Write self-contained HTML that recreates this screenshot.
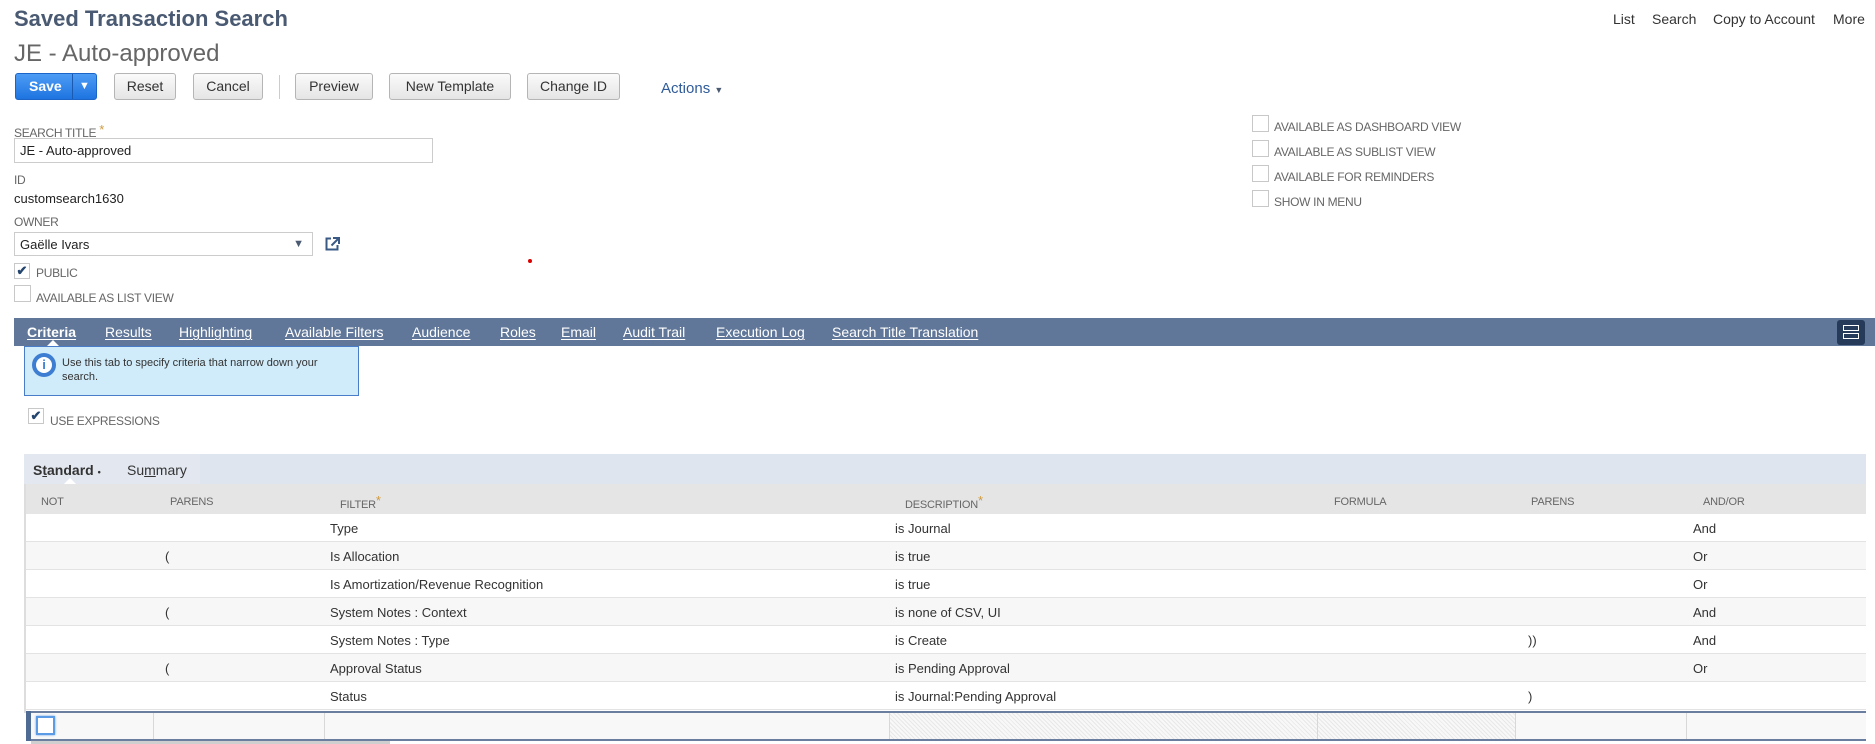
<!DOCTYPE html>
<html><head><meta charset="utf-8"><style>
*{box-sizing:border-box;margin:0;padding:0}
body{width:1875px;height:744px;overflow:hidden;background:#fff;font-family:"Liberation Sans",sans-serif;color:#222;position:relative;font-size:13px}
.a{position:absolute;white-space:nowrap}
.lbl{font-size:12px;color:#666;text-transform:uppercase;letter-spacing:-0.3px}
.btn{position:absolute;top:73px;height:27px;border:1px solid #b5b5b5;border-radius:3px;background:linear-gradient(#fafafa,#e5e5e5);font-size:14px;color:#333;text-align:center;line-height:25px}
.cb{position:absolute;width:17px;height:17px;border:1px solid #c8c8c8;background:#fff}
.ck{position:absolute;width:16px;height:16px;border:1px solid #c8c8c8;background:#fff;color:#24456e;font-size:13px;line-height:14px;text-align:center;font-weight:bold}
.tab{position:absolute;top:324px;color:#fff;font-size:14px;text-decoration:underline;text-decoration-thickness:1px;text-underline-offset:2px}
.row{position:absolute;left:26px;width:1840px;height:28px;border-bottom:1px solid #e3e3e3}
.row div{position:absolute;top:7px;font-size:13px;color:#333}
.hd{position:absolute;top:496px;font-size:11px;color:#666;letter-spacing:-0.2px}
.st{color:#d09a3f;font-size:13px;position:relative;top:-3px}
</style></head><body>
<div class="a" style="left:14px;top:6px;font-size:22px;font-weight:bold;color:#4a5a72">Saved Transaction Search</div>
<div class="a" style="left:14px;top:40px;font-size:24px;color:#666">JE - Auto-approved</div>
<div class="a" style="top:11px;left:1613px;font-size:14px;color:#333">List</div>
<div class="a" style="top:11px;left:1652px;font-size:14px;color:#333">Search</div>
<div class="a" style="top:11px;left:1713px;font-size:14px;color:#333">Copy to Account</div>
<div class="a" style="top:11px;left:1833px;font-size:14px;color:#333">More</div>

<div class="btn" style="left:15px;width:82px;background:linear-gradient(#4d9cf5,#1e74e0);border-color:#1a65c7;color:#fff;font-weight:bold;text-align:left;padding-left:13px">Save<span style="position:absolute;left:56px;top:0;width:1px;height:25px;background:#1a5ab0"></span><span style="position:absolute;left:63px;font-size:11px;font-weight:normal">▼</span></div>
<div class="btn" style="left:114px;width:62px">Reset</div>
<div class="btn" style="left:193px;width:70px">Cancel</div>
<div class="a" style="left:279px;top:75px;width:1px;height:24px;background:#ccc"></div>
<div class="btn" style="left:295px;width:78px">Preview</div>
<div class="btn" style="left:389px;width:122px">New Template</div>
<div class="btn" style="left:527px;width:93px">Change ID</div>
<div class="a" style="left:661px;top:80px;font-size:15px;color:#2f5b9a">Actions <span style="font-size:9px;color:#4a5a72">▼</span></div>

<div class="a lbl" style="left:14px;top:125px">Search Title <span class="st">*</span></div>
<div class="a" style="left:14px;top:138px;width:419px;height:25px;border:1px solid #ccc;padding:4px 5px;font-size:13px">JE - Auto-approved</div>
<div class="a lbl" style="left:14px;top:173px">ID</div>
<div class="a" style="left:14px;top:191px">customsearch1630</div>
<div class="a lbl" style="left:14px;top:215px">Owner</div>
<div class="a" style="left:14px;top:232px;width:299px;height:24px;border:1px solid #ccc;padding:4px 5px">Gaëlle Ivars<span style="position:absolute;right:8px;top:5px;color:#4a5a72;font-size:11px">▼</span></div>
<svg class="a" style="left:325px;top:237px" width="15" height="14" viewBox="0 0 15 14"><path d="M6 1.5H1.5v11h11V8" fill="none" stroke="#3a5a85" stroke-width="2"/><path d="M8 1h6v6M14 1L6.5 8.5" fill="none" stroke="#3a5a85" stroke-width="2"/></svg>
<div class="a" style="left:528px;top:259px;width:4px;height:4px;border-radius:2px;background:#d00"></div>

<div class="ck" style="left:14px;top:263px">✔</div>
<div class="a lbl" style="left:36px;top:266px">Public</div>
<div class="cb" style="left:14px;top:285px"></div>
<div class="a lbl" style="left:36px;top:291px">Available as list view</div>

<div class="cb" style="left:1252px;top:115px"></div><div class="a lbl" style="left:1274px;top:120px">Available as dashboard view</div>
<div class="cb" style="left:1252px;top:140px"></div><div class="a lbl" style="left:1274px;top:145px">Available as sublist view</div>
<div class="cb" style="left:1252px;top:165px"></div><div class="a lbl" style="left:1274px;top:170px">Available for reminders</div>
<div class="cb" style="left:1252px;top:190px"></div><div class="a lbl" style="left:1274px;top:195px">Show in menu</div>

<div class="a" style="left:14px;top:318px;width:1861px;height:28px;background:#607799"></div>
<div class="tab" style="left:27px;font-weight:bold">Criteria</div>
<div class="a" style="left:47px;top:340px;width:0;height:0;border:6px solid transparent;border-bottom-color:#fff;border-top:0"></div>
<div class="tab" style="left:105px">Results</div>
<div class="tab" style="left:179px">Highlighting</div>
<div class="tab" style="left:285px">Available Filters</div>
<div class="tab" style="left:412px">Audience</div>
<div class="tab" style="left:500px">Roles</div>
<div class="tab" style="left:561px">Email</div>
<div class="tab" style="left:623px">Audit Trail</div>
<div class="tab" style="left:716px">Execution Log</div>
<div class="tab" style="left:832px">Search Title Translation</div>
<div class="a" style="left:1837px;top:320px;width:28px;height:25px;background:#263a5a;border-radius:3px"><div style="position:absolute;left:6px;top:5px;width:16px;height:6px;border:1.5px solid #fff"></div><div style="position:absolute;left:6px;top:13px;width:16px;height:6px;border:1.5px solid #fff"></div></div>

<div class="a" style="left:24px;top:346px;width:335px;height:50px;background:#d0ebf9;border:1px solid #4a7dc8"></div>
<div class="a" style="left:32px;top:353px;width:24px;height:24px;border-radius:12px;background:#3d7ed3"><div style="position:absolute;left:4px;top:4px;width:16px;height:16px;border-radius:8px;background:#fff;color:#3d7ed3;font-weight:bold;font-size:13px;text-align:center;line-height:16px">i</div></div>
<div class="a" style="left:62px;top:356px;font-size:11px;line-height:14px;color:#333;white-space:normal;width:290px">Use this tab to specify criteria that narrow down your search.</div>

<div class="ck" style="left:28px;top:408px">✔</div>
<div class="a lbl" style="left:50px;top:414px">Use expressions</div>

<div class="a" style="left:24px;top:454px;width:1842px;height:30px;background:#dfe5ee"></div>
<div class="a" style="left:24px;top:454px;width:176px;height:30px;background:#e3e8f0"></div>
<div class="a" style="left:33px;top:462px;font-size:14px;font-weight:bold;color:#333">S<u>t</u>andard <span style="font-size:9px">•</span></div>
<div class="a" style="left:127px;top:462px;font-size:14px;color:#333">Su<u>m</u>mary</div>
<div class="a" style="left:64px;top:478px;border:6px solid transparent;border-bottom-color:#fff;border-top:0"></div>

<div class="a" style="left:24px;top:484px;width:2px;height:229px;background:#ddd"></div>
<div class="a" style="left:26px;top:484px;width:1840px;height:30px;background:#e5e5e5"></div>
<div class="hd" style="left:41px">NOT</div>
<div class="hd" style="left:170px">PARENS</div>
<div class="hd" style="left:340px">FILTER<span class="st">*</span></div>
<div class="hd" style="left:905px">DESCRIPTION<span class="st">*</span></div>
<div class="hd" style="left:1334px">FORMULA</div>
<div class="hd" style="left:1531px">PARENS</div>
<div class="hd" style="left:1703px">AND/OR</div>

<div class="row" style="top:514px;background:#fff"><div style="left:304px">Type</div><div style="left:869px">is Journal</div><div style="left:1667px">And</div></div>
<div class="row" style="top:542px;background:#f7f7f7"><div style="left:139px">(</div><div style="left:304px">Is Allocation</div><div style="left:869px">is true</div><div style="left:1667px">Or</div></div>
<div class="row" style="top:570px;background:#fff"><div style="left:304px">Is Amortization/Revenue Recognition</div><div style="left:869px">is true</div><div style="left:1667px">Or</div></div>
<div class="row" style="top:598px;background:#f7f7f7"><div style="left:139px">(</div><div style="left:304px">System Notes : Context</div><div style="left:869px">is none of CSV, UI</div><div style="left:1667px">And</div></div>
<div class="row" style="top:626px;background:#fff"><div style="left:304px">System Notes : Type</div><div style="left:869px">is Create</div><div style="left:1502px">))</div><div style="left:1667px">And</div></div>
<div class="row" style="top:654px;background:#f7f7f7"><div style="left:139px">(</div><div style="left:304px">Approval Status</div><div style="left:869px">is Pending Approval</div><div style="left:1667px">Or</div></div>
<div class="row" style="top:682px;background:#fff"><div style="left:304px">Status</div><div style="left:869px">is Journal:Pending Approval</div><div style="left:1502px">)</div></div>

<div class="a" style="left:26px;top:711px;width:1840px;height:30px;background:#f8f8f8;border-top:2px solid #6a7fa0;border-bottom:2px solid #6a7fa0"></div>
<div class="a" style="left:889px;top:713px;width:626px;height:26px;background:repeating-linear-gradient(45deg,#e8e8e8 0 1px,#f8f8f8 1px 3px)"></div>
<div class="a" style="left:26px;top:711px;width:5px;height:30px;background:#4f6a93"></div>
<div class="a" style="left:153px;top:713px;width:1px;height:26px;background:#d8d8d8"></div>
<div class="a" style="left:324px;top:713px;width:1px;height:26px;background:#d8d8d8"></div>
<div class="a" style="left:889px;top:713px;width:1px;height:26px;background:#d8d8d8"></div>
<div class="a" style="left:1317px;top:713px;width:1px;height:26px;background:#d8d8d8"></div>
<div class="a" style="left:1515px;top:713px;width:1px;height:26px;background:#d8d8d8"></div>
<div class="a" style="left:1686px;top:713px;width:1px;height:26px;background:#d8d8d8"></div>
<div class="a" style="left:36px;top:716px;width:19px;height:19px;border:2px solid #5b9be6;background:#fff;box-shadow:0 0 2px #5b9be6"></div>
<div class="a" style="left:31px;top:741px;width:359px;height:3px;background:#cfcfcf"></div>
</body></html>
